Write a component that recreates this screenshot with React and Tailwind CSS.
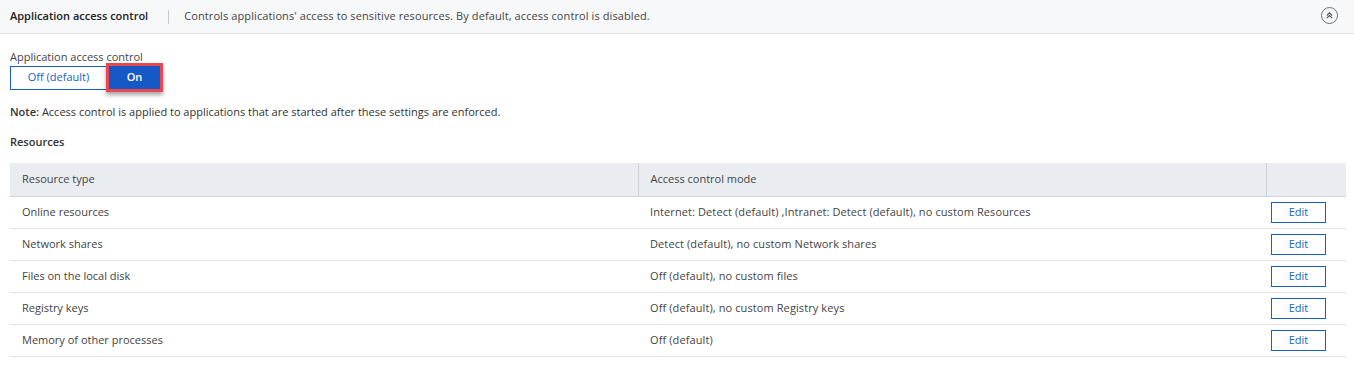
import React from "react";

const rows = [
  ["Online resources", "Internet: Detect (default) ,Intranet: Detect (default), no custom Resources"],
  ["Network shares", "Detect (default), no custom Network shares"],
  ["Files on the local disk", "Off (default), no custom files"],
  ["Registry keys", "Off (default), no custom Registry keys"],
  ["Memory of other processes", "Off (default)"],
];

export default function App() {
  return (
    <div className="w-[1354px] h-[370px] bg-white text-[11px] text-[#333]" style={{ fontFamily: '"Open Sans", "Noto Sans", sans-serif' }}>
      <div className="h-[34px] bg-[#f7f8fa] border-b border-[#e3e3e3] flex items-center pl-[10px] pr-[16px]">
        <span className="font-semibold text-[#222]">Application access control</span>
        <span className="ml-[20px] mr-[15px] w-px h-[14px] bg-[#c8c8c8]" />
        <span className="text-[#444] tracking-[0.1px]">Controls applications' access to sensitive resources. By default, access control is disabled.</span>
        <span className="ml-auto w-[17px] h-[17px] rounded-full border border-[#6b6f80] flex items-center justify-center -mt-[2px]">
          <svg width="9" height="9" viewBox="0 0 10 10" fill="none" stroke="#555" strokeWidth="1.2">
            <path d="M2 5 L5 2 L8 5" />
            <path d="M2 8 L5 5 L8 8" />
          </svg>
        </span>
      </div>

      <div className="px-[10px]">
        <div className="mt-[17px] leading-[12px] text-[#444]">Application access control</div>
        <div className="flex items-center h-[29px]">
          <button className="h-[24px] w-[97px] border border-[#1a5fc8] text-[#1a5fc8] bg-white">Off (default)</button>
          <div className="h-[29px] w-[57px] -ml-[1px] border-[3px] border-[#e9474f] shadow-[0_3px_4px_rgba(0,0,0,0.35)] bg-[#1559c7] flex items-center justify-center text-white font-semibold">
            On
          </div>
        </div>
        <div className="mt-[12px] text-[#333]"><span className="font-semibold">Note:</span> Access control is applied to applications that are started after these settings are enforced.</div>
        <div className="mt-[13px] font-semibold text-[#333]">Resources</div>

        <table className="mt-[13px] w-[1336px] border-collapse">
          <thead>
            <tr className="h-[33px] bg-[#e9edf1] text-[#444]">
              <th className="w-[628px] text-left font-normal pl-[12px] border-b border-[#cfd3d6] border-r">Resource type</th>
              <th className="w-[628px] text-left font-normal pl-[12px] border-b border-[#cfd3d6] border-r">Access control mode</th>
              <th className="border-b border-[#cfd3d6]"></th>
            </tr>
          </thead>
          <tbody>
            {rows.map(([a, b]) => (
              <tr key={a} className="h-[32px] border-b border-[#e3e3e3] text-[#444]">
                <td className="pl-[12px]">{a}</td>
                <td className="pl-[12px] tracking-[0.1px]">{b}</td>
                <td>
                  <button className="ml-[5px] w-[55px] h-[21px] border border-[#1a5fc8] text-[#1a5fc8] bg-white">Edit</button>
                </td>
              </tr>
            ))}
          </tbody>
        </table>
      </div>
    </div>
  );
}
